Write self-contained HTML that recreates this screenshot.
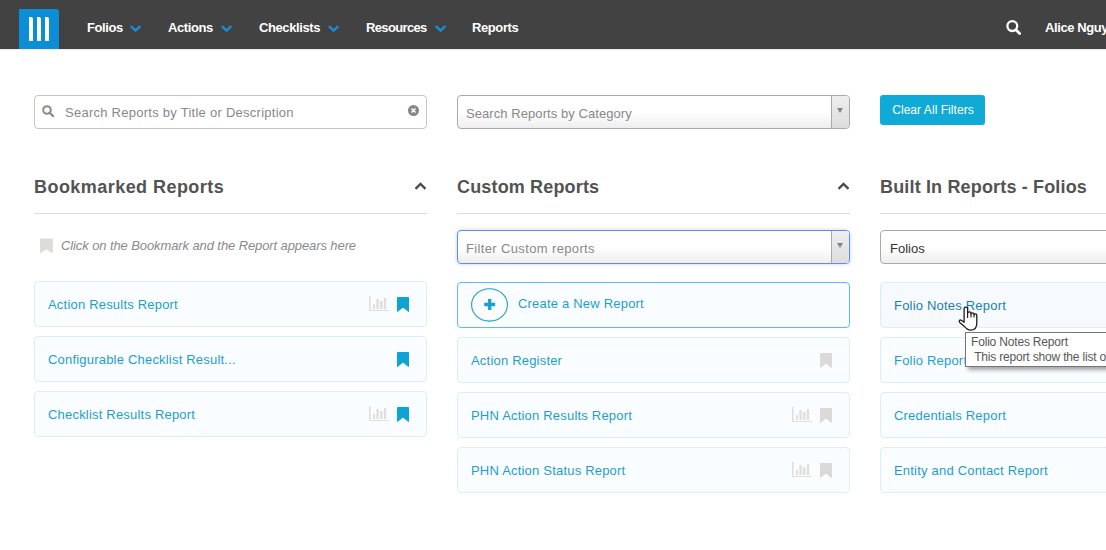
<!DOCTYPE html>
<html><head><meta charset="utf-8">
<style>
*{box-sizing:border-box;margin:0;padding:0}
html,body{width:1106px;height:550px;overflow:hidden;background:#fff;font-family:"Liberation Sans",sans-serif;position:relative}
.abs{position:absolute}
#nav{left:0;top:0;width:1106px;height:49px;background:#424242;box-shadow:0 1px 1px rgba(0,0,0,0.08)}
#logo{left:19px;top:9px;width:40px;height:40px;background:#0b8ed6;border-radius:0 3px 0 0}
#logo i{position:absolute;top:8px;width:4px;height:24px;background:#fff;border-radius:0 2px 0 0}
.nv{position:absolute;top:3px;height:49px;line-height:49px;letter-spacing:-0.4px;color:#fff;font-weight:700;font-size:13px;white-space:nowrap}
.chev{position:absolute;top:25px}
.inp{border:1px solid #c9c6c2;border-radius:4px;background:#fff}
.ph{color:#888;font-size:13px;white-space:nowrap;position:absolute}
.sel{border:1px solid #aaa;border-radius:4px;background:linear-gradient(#fff 0%,#fff 50%,#eee 100%)}
.sel .arr{position:absolute;right:0;top:0;bottom:0;width:18px;border-left:1px solid #aaa;background:linear-gradient(#eee,#ddd);border-radius:0 3px 3px 0}
.sel .arr:after{content:"";position:absolute;left:5px;top:12px;border-left:3px solid transparent;border-right:3px solid transparent;border-top:5px solid #858380}
.btn{background:#10aad6;border-radius:3px;color:#fff;font-size:12px;text-align:center;letter-spacing:0.05px;padding-left:1px}
.h2{position:absolute;font-size:18px;font-weight:700;color:#535353;white-space:nowrap;letter-spacing:0.16px;margin-top:2px}
.div{position:absolute;height:1px;background:#ddd}
.card{position:absolute;height:46px;border:1px solid #ddedf8;border-radius:4px;background:#fafdff}
.card .t{position:absolute;left:13px;top:1px;line-height:44px;letter-spacing:0.2px;font-size:13px;color:#1d9ecf;white-space:nowrap}
.bm{position:absolute;width:12px;height:15px;margin-top:0.5px}
.ch{position:absolute;width:20px;height:15px}
</style></head><body>
<div id="nav" class="abs">
  <div id="logo" class="abs"><i style="left:10px"></i><i style="left:18px"></i><i style="left:26px"></i></div>
  <div class="nv" style="left:87px">Folios</div>
  <svg class="chev" style="left:130px" width="12" height="8" viewBox="0 0 12 8"><path d="M0.9 1.1 L5.6 5.6 L10.3 1.1" stroke="#1a8dd4" stroke-width="2.4" fill="none"/></svg>
  <div class="nv" style="left:168px">Actions</div>
  <svg class="chev" style="left:221px" width="12" height="8" viewBox="0 0 12 8"><path d="M0.9 1.1 L5.6 5.6 L10.3 1.1" stroke="#1a8dd4" stroke-width="2.4" fill="none"/></svg>
  <div class="nv" style="left:259px">Checklists</div>
  <svg class="chev" style="left:328px" width="12" height="8" viewBox="0 0 12 8"><path d="M0.9 1.1 L5.6 5.6 L10.3 1.1" stroke="#1a8dd4" stroke-width="2.4" fill="none"/></svg>
  <div class="nv" style="left:366px;letter-spacing:-0.65px">Resources</div>
  <svg class="chev" style="left:435px" width="12" height="8" viewBox="0 0 12 8"><path d="M0.9 1.1 L5.6 5.6 L10.3 1.1" stroke="#1a8dd4" stroke-width="2.4" fill="none"/></svg>
  <div class="nv" style="left:472px">Reports</div>
  <svg class="abs" style="left:1006px;top:20px" width="16" height="15" viewBox="0 0 16 15"><circle cx="6.3" cy="6.1" r="4.9" stroke="#fff" stroke-width="2.3" fill="none"/><path d="M9.8 9.7 L13.6 13.4" stroke="#fff" stroke-width="2.8" stroke-linecap="round"/></svg>
  <div class="nv" style="left:1045px">Alice Nguyen</div>
</div>

<!-- filters -->
<div class="abs inp" style="left:34px;top:95px;width:393px;height:34px">
  <svg class="abs" style="left:7px;top:9px" width="13" height="13" viewBox="0 0 13 13"><circle cx="5" cy="5" r="3.8" stroke="#8e8a86" stroke-width="2" fill="none"/><path d="M7.6 7.6 L11.2 11.2" stroke="#8e8a86" stroke-width="2.2" stroke-linecap="round"/></svg>
  <div class="ph" style="left:30px;top:9px;letter-spacing:0.26px">Search Reports by Title or Description</div>
  <svg class="abs" style="left:373px;top:9px" width="11" height="11" viewBox="0 0 11 11"><circle cx="5.5" cy="5.5" r="5.5" fill="#8a8580"/><path d="M3.5 3.5 L7.5 7.5 M7.5 3.5 L3.5 7.5" stroke="#fff" stroke-width="1.6"/></svg>
</div>
<div class="abs sel" style="left:457px;top:95px;width:393px;height:34px">
  <div class="ph" style="left:8px;top:10px;letter-spacing:0.07px">Search Reports by Category</div>
  <div class="arr"></div>
</div>
<div class="abs btn" style="left:880px;top:95px;width:105px;height:30px;line-height:30px">Clear All Filters</div>

<!-- col 1 -->
<div class="h2" style="left:34px;top:175px;letter-spacing:0.45px">Bookmarked Reports</div>
<svg class="abs" style="left:414px;top:182px" width="13" height="9" viewBox="0 0 13 9"><path d="M1.5 6.9 L6.5 1.9 L11.5 6.9" stroke="#4a4a4a" stroke-width="2.2" fill="none"/></svg>
<div class="div" style="left:34px;top:213px;width:393px"></div>
<svg class="abs" style="left:40px;top:238px" width="13" height="16" viewBox="0 0 13 16"><path d="M0.5 1 H12.3 V14.7 L6.4 10.9 L0.5 14.7 Z" fill="#dedcda" stroke="#dedcda" stroke-width="1" stroke-linejoin="round"/></svg>
<div class="ph" style="left:61px;top:238px;font-style:italic;color:#8a8a8a;letter-spacing:-0.1px">Click on the Bookmark and the Report appears here</div>

<div class="card" style="left:34px;top:281px;width:393px"><div class="t">Action Results Report</div><svg class="ch" style="right:37px;top:14px" width="20" height="15" viewBox="0 0 20 15"><g fill="#e2deda"><rect x="0" y="0" width="1.6" height="15"/><rect x="0" y="14" width="20" height="1"/><rect x="4" y="8" width="2" height="5"/><rect x="7.4" y="3" width="2.4" height="10"/><rect x="11.1" y="5" width="2.4" height="8"/><rect x="14.8" y="2" width="2.4" height="11"/></g></svg><svg class="bm" style="right:17px;top:14px" width="12" height="15" viewBox="0 0 12 15"><path d="M0.5 0.5 H11.5 V14.5 L6 10 L0.5 14.5 Z" fill="#0ea3d3" stroke="#0ea3d3" stroke-width="1" stroke-linejoin="round"/></svg></div>
<div class="card" style="left:34px;top:336px;width:393px"><div class="t">Configurable Checklist Result...</div><svg class="bm" style="right:17px;top:14px" width="12" height="15" viewBox="0 0 12 15"><path d="M0.5 0.5 H11.5 V14.5 L6 10 L0.5 14.5 Z" fill="#0ea3d3" stroke="#0ea3d3" stroke-width="1" stroke-linejoin="round"/></svg></div>
<div class="card" style="left:34px;top:391px;width:393px"><div class="t">Checklist Results Report</div><svg class="ch" style="right:37px;top:14px" width="20" height="15" viewBox="0 0 20 15"><g fill="#e2deda"><rect x="0" y="0" width="1.6" height="15"/><rect x="0" y="14" width="20" height="1"/><rect x="4" y="8" width="2" height="5"/><rect x="7.4" y="3" width="2.4" height="10"/><rect x="11.1" y="5" width="2.4" height="8"/><rect x="14.8" y="2" width="2.4" height="11"/></g></svg><svg class="bm" style="right:17px;top:14px" width="12" height="15" viewBox="0 0 12 15"><path d="M0.5 0.5 H11.5 V14.5 L6 10 L0.5 14.5 Z" fill="#0ea3d3" stroke="#0ea3d3" stroke-width="1" stroke-linejoin="round"/></svg></div>

<!-- col 2 -->
<div class="h2" style="left:457px;top:175px">Custom Reports</div>
<svg class="abs" style="left:837px;top:182px" width="13" height="9" viewBox="0 0 13 9"><path d="M1.5 6.9 L6.5 1.9 L11.5 6.9" stroke="#4a4a4a" stroke-width="2.2" fill="none"/></svg>
<div class="div" style="left:457px;top:213px;width:393px"></div>
<div class="abs sel" style="left:457px;top:230px;width:393px;height:34px;border-color:#4f94f5;box-shadow:0 0 4px rgba(0,0,0,0.18)">
  <div class="ph" style="left:8px;top:10px;letter-spacing:0.36px">Filter Custom reports</div>
  <div class="arr"></div>
</div>
<div class="card" style="left:457px;top:282px;width:393px;border-color:#5cbde6">
  <svg class="abs" style="left:13px;top:5px" width="38" height="36" viewBox="0 0 38 36"><ellipse cx="18.5" cy="16.9" rx="17.9" ry="16.2" stroke="#1a9fcf" stroke-width="1.1" fill="none"/><path d="M18.7 11.1 V21.9 M13.2 16.5 H24.2" stroke="#1a9fcf" stroke-width="3.3"/></svg>
  <div class="t" style="left:60px;top:-1px">Create a New Report</div>
</div>
<div class="card" style="left:457px;top:337px;width:393px"><div class="t">Action Register</div><svg class="bm" style="right:17px;top:14px" width="12" height="15" viewBox="0 0 12 15"><path d="M0.5 0.5 H11.5 V14.5 L6 10 L0.5 14.5 Z" fill="#dcdad8" stroke="#dcdad8" stroke-width="1" stroke-linejoin="round"/></svg></div>
<div class="card" style="left:457px;top:392px;width:393px"><div class="t">PHN Action Results Report</div><svg class="ch" style="right:37px;top:14px" width="20" height="15" viewBox="0 0 20 15"><g fill="#e2deda"><rect x="0" y="0" width="1.6" height="15"/><rect x="0" y="14" width="20" height="1"/><rect x="4" y="8" width="2" height="5"/><rect x="7.4" y="3" width="2.4" height="10"/><rect x="11.1" y="5" width="2.4" height="8"/><rect x="14.8" y="2" width="2.4" height="11"/></g></svg><svg class="bm" style="right:17px;top:14px" width="12" height="15" viewBox="0 0 12 15"><path d="M0.5 0.5 H11.5 V14.5 L6 10 L0.5 14.5 Z" fill="#dcdad8" stroke="#dcdad8" stroke-width="1" stroke-linejoin="round"/></svg></div>
<div class="card" style="left:457px;top:447px;width:393px"><div class="t">PHN Action Status Report</div><svg class="ch" style="right:37px;top:14px" width="20" height="15" viewBox="0 0 20 15"><g fill="#e2deda"><rect x="0" y="0" width="1.6" height="15"/><rect x="0" y="14" width="20" height="1"/><rect x="4" y="8" width="2" height="5"/><rect x="7.4" y="3" width="2.4" height="10"/><rect x="11.1" y="5" width="2.4" height="8"/><rect x="14.8" y="2" width="2.4" height="11"/></g></svg><svg class="bm" style="right:17px;top:14px" width="12" height="15" viewBox="0 0 12 15"><path d="M0.5 0.5 H11.5 V14.5 L6 10 L0.5 14.5 Z" fill="#dcdad8" stroke="#dcdad8" stroke-width="1" stroke-linejoin="round"/></svg></div>

<!-- col 3 -->
<div class="h2" style="left:880px;top:175px">Built In Reports - Folios</div>
<div class="div" style="left:880px;top:213px;width:393px"></div>
<div class="abs sel" style="left:880px;top:230px;width:393px;height:34px">
  <div class="ph" style="left:9px;top:10px;color:#333">Folios</div>
</div>
<div class="card" style="left:880px;top:282px;width:393px;background:#f6fafd"><div class="t" style="color:#1b80ad">Folio Notes Report</div></div>
<div class="card" style="left:880px;top:337px;width:393px"><div class="t">Folio Report</div></div>
<div class="card" style="left:880px;top:392px;width:393px"><div class="t">Credentials Report</div></div>
<div class="card" style="left:880px;top:447px;width:393px"><div class="t">Entity and Contact Report</div></div>


<!-- tooltip -->
<div class="abs" style="left:965px;top:332px;width:200px;height:35px;border:1px solid #767676;background:#fff;box-shadow:3px 3px 4px rgba(0,0,0,0.35)">
  <div class="abs" style="left:5px;top:2px;font-size:12px;line-height:15px;color:#575757;white-space:nowrap;letter-spacing:-0.18px">Folio Notes Report<br>&nbsp;This report show the list of notes</div>
</div>
<!-- cursor -->
<svg class="abs" style="left:958px;top:306px" width="21" height="26" viewBox="0 0 21 26">
<path d="M6.1 13.2 V2.8 A1.75 1.75 0 0 1 9.6 2.8 V7.6 A1.7 1.7 0 0 1 13 7.6 V8.3 A1.5 1.5 0 0 1 16 8.3 V9.2 A1.4 1.4 0 0 1 18.8 9.2 V17 C18.8 21.5 16.5 24.2 12.5 24.2 C9.5 24.2 8 22.5 6.2 20.2 L1.7 16.4 C0.6 15.3 1.6 13.4 3.2 14.3 L6.1 16.3 Z" fill="#fff" stroke="#1a1a1a" stroke-width="1.3" stroke-linejoin="round"/>
<path d="M9.6 7.6 V12 M13 8.3 V11.5 M16 9.2 V11.5" stroke="#1a1a1a" stroke-width="1.1"/>
</svg>
</body></html>
